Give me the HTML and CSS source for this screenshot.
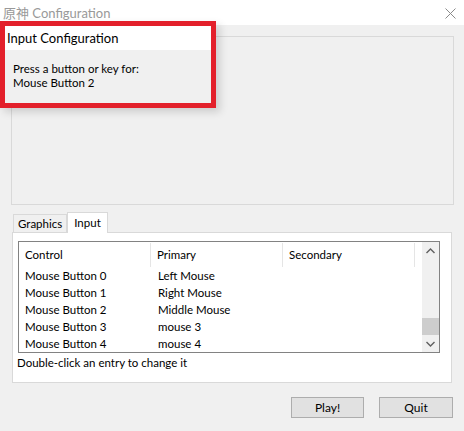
FILE: index.html
```html
<!DOCTYPE html>
<html lang="en">
<head>
<meta charset="UTF-8">
<title>原神 Configuration</title>
<link rel="stylesheet" href="styles.css">
</head>
<body>
  <div class="titlebar">
    <span class="title">原神 Configuration</span>
    <svg class="close" width="11" height="11" viewBox="0 0 11 11">
      <path d="M0.5 0.5 L10.5 10.5 M10.5 0.5 L0.5 10.5" stroke="#8a8a8a" stroke-width="1" fill="none"/>
    </svg>
  </div>

  <div class="main">
    <div class="banner"></div>

    <div class="tabs">
      <div class="tab">Graphics</div>
      <div class="tab active">Input</div>
    </div>

    <div class="panel">
      <div class="listbox">
        <div class="list">
          <div class="row head">
            <div class="cell">Control</div>
            <div class="cell">Primary</div>
            <div class="cell">Secondary</div>
          </div>
          <div class="row"><div class="cell">Mouse Button 0</div><div class="cell">Left Mouse</div><div class="cell"></div></div>
          <div class="row"><div class="cell">Mouse Button 1</div><div class="cell">Right Mouse</div><div class="cell"></div></div>
          <div class="row"><div class="cell">Mouse Button 2</div><div class="cell">Middle Mouse</div><div class="cell"></div></div>
          <div class="row"><div class="cell">Mouse Button 3</div><div class="cell">mouse 3</div><div class="cell"></div></div>
          <div class="row"><div class="cell">Mouse Button 4</div><div class="cell">mouse 4</div><div class="cell"></div></div>
        </div>
        <div class="scrollbar">
          <div class="arrow">
            <svg width="9" height="6" viewBox="0 0 9 6"><path d="M0.5 5 L4.5 1 L8.5 5" stroke="#606060" stroke-width="1.4" fill="none"/></svg>
          </div>
          <div class="track"><div class="thumb"></div></div>
          <div class="arrow">
            <svg width="9" height="6" viewBox="0 0 9 6"><path d="M0.5 1 L4.5 5 L8.5 1" stroke="#606060" stroke-width="1.4" fill="none"/></svg>
          </div>
        </div>
      </div>
      <div class="hint">Double-click an entry to change it</div>
    </div>

    <div class="buttons">
      <button class="btn play">Play!</button>
      <button class="btn quit">Quit</button>
    </div>
  </div>

  <!-- popup that sits over the window -->
  <div class="popup">
    <div class="popup-title">Input Configuration</div>
    <div class="popup-body">
      <div>Press a button or key for:</div>
      <div>Mouse Button 2</div>
    </div>
  </div>
</body>
</html>
```

FILE: styles.css
```css
body {
  margin: 0;
  width: 464px;
  height: 431px;
  background: #f0f0f0;
  font-family: Lato, "Noto Sans CJK SC", sans-serif;
  font-size: 11.5px;
  color: #000;
  position: relative;
  overflow: hidden;
}

.titlebar {
  height: 25px;
  background: #fff;
  display: flex;
  align-items: center;
  justify-content: space-between;
  padding: 0 8px 0 3px;
}

.title {
  color: #999;
  font-size: 13px;
}

.close {
  margin-top: 1px;
}

.main {
  padding: 11px 10px 0 11px;
}

.banner {
  height: 167px;
  border: 1px solid #d9d9d9;
}

.tabs {
  display: flex;
  align-items: flex-end;
  margin-top: 7px;
  padding-left: 2px;
  height: 20px;
}

.tab {
  height: 17px;
  line-height: 18px;
  padding: 0 4px;
  border: 1px solid #d9d9d9;
  border-bottom: none;
  background: #f0f0f0;
}

.tab.active {
  height: 20px;
  line-height: 19px;
  padding: 0 6px;
  background: #fff;
  margin-bottom: -1px;
  position: relative;
  z-index: 1;
}

.panel {
  width: 438px;
  margin-left: 1px;
  height: 149px;
  border: 1px solid #d9d9d9;
  background: #fff;
}

.listbox {
  margin: 8px 0 0 5px;
  width: 420px;
  height: 110px;
  border: 1px solid #828282;
  display: flex;
}

.list {
  flex: 1;
}

.row {
  display: flex;
  height: 17px;
  line-height: 17px;
}

.cell {
  width: 132px;
  padding-left: 6px;
  box-sizing: border-box;
}

.row .cell + .cell {
  padding-left: 7px;
}

.row.head {
  height: 25px;
}

.head .cell {
  border-right: 1px solid #e5e5e5;
  margin-top: 1px;
  height: 24px;
  line-height: 24px;
}

.head .cell + .cell {
  padding-left: 6px;
}

.scrollbar {
  width: 17px;
  background: #f0f0f0;
  display: flex;
  flex-direction: column;
}

.arrow {
  height: 17px;
  display: flex;
  align-items: center;
  justify-content: center;
}

.track {
  flex: 1;
  display: flex;
  flex-direction: column;
  justify-content: flex-end;
}

.thumb {
  height: 17px;
  background: #cdcdcd;
}

.hint {
  padding: 3px 0 0 4px;
}

.buttons {
  display: flex;
  justify-content: flex-end;
  gap: 15px;
  margin-top: 14px;
  padding-right: 1px;
}

.btn {
  font-family: inherit;
  font-size: 12px;
  height: 21px;
  padding: 0;
  background: #e1e1e1;
  border: 1px solid #adadad;
  color: #000;
}

.play {
  width: 73px;
}

.quit {
  width: 74px;
}

.popup {
  position: absolute;
  left: 0;
  top: 21px;
  width: 206px;
  height: 77px;
  border: 5px solid #e3202b;
  background: #f0f0f0;
  box-shadow: 4px 4px 8px rgba(0, 0, 0, 0.15);
}

.popup-title {
  height: 24px;
  line-height: 24px;
  background: #fff;
  padding-left: 2px;
  font-size: 13px;
}

.popup-body {
  padding: 12px 0 0 8px;
  line-height: 14px;
}
```
